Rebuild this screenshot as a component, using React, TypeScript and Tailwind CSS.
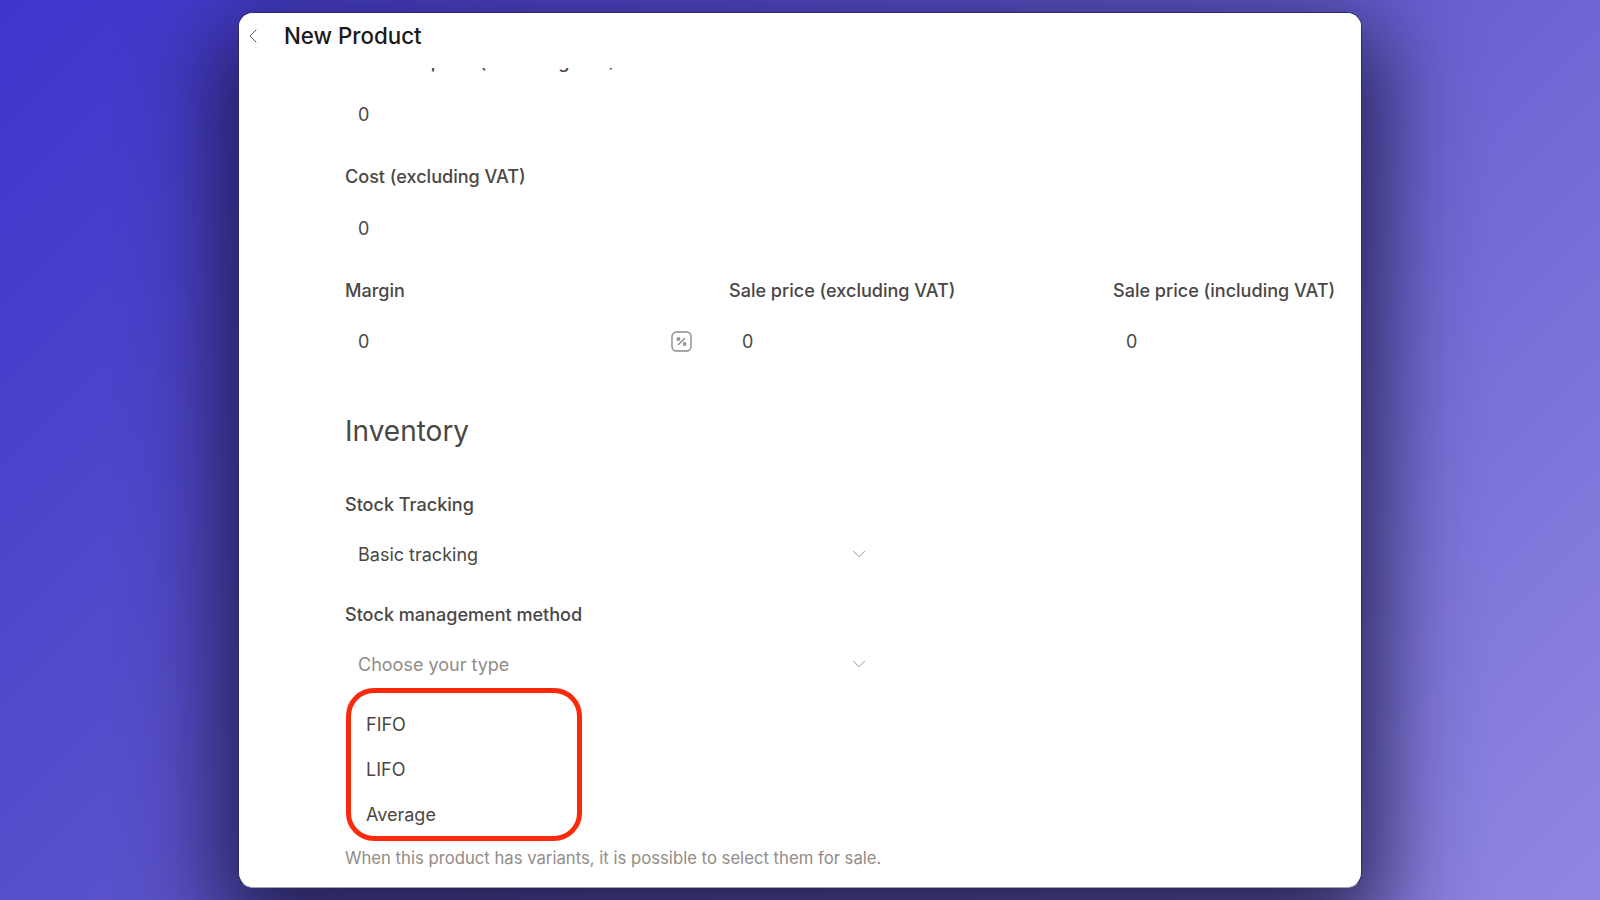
import { ChevronDown, ChevronLeft } from "lucide-react";

const labelClass = "h-6 text-[18.06px] leading-6 font-medium text-[#4a4744]";
const valueClass = "flex h-12 items-center pl-[13px] text-[18px] text-[#4a4744]";

const PercentIcon = () => (
    <svg width="21" height="21" viewBox="0 0 21 21" fill="none" stroke="#8f8a86" strokeWidth="1.4">
        <rect x="1" y="1" width="19" height="19" rx="4.5" />
        <path d="M7.5 13.5 13.5 7.5" strokeLinecap="round" />
        <circle cx="7.4" cy="8" r="1.2" />
        <circle cx="13.6" cy="13" r="1.2" />
    </svg>
);

const SelectField = ({ label, value, muted }: { label: string; value: string; muted?: boolean }) => (
    <div className="w-[528px]">
        <p className={labelClass}>{label}</p>
        <div className="mt-[13px] flex h-12 items-center justify-between pl-[13px] pr-[3px]">
            <span className={`text-[18px] ${muted ? "text-[#928c87]" : "text-[#4a4744]"}`}>{value}</span>
            <ChevronDown size={22} strokeWidth={1} color="#8f8a86" />
        </div>
    </div>
);

export default function App() {
    return (
        <div className="flex h-[900px] w-[1600px] justify-center overflow-hidden bg-[linear-gradient(135deg,#3f34cc_0%,#5d55cb_45%,#9087e3_100%)] pt-3 font-['Inter',sans-serif]">
            <div className="flex h-[876px] w-[1124px] flex-col overflow-hidden rounded-[15px] border border-[#2b2a70] border-b-[#a5a5b0] bg-white shadow-[0_34px_90px_20px_rgba(24,22,60,0.85)]">
                <header className="z-10 flex h-[55px] shrink-0 items-start bg-white pl-0.5 pt-2">
                    <ChevronLeft size={24} strokeWidth={1} color="#55514e" className="mt-[3px]" />
                    <h1 className="ml-[19px] text-[22.3px] leading-[29px] font-medium text-[#1c1a19]">New Product</h1>
                </header>

                <div className="flex-1 overflow-hidden pl-[106px]">
                    <div className="-mt-[18px]">
                        <p className={labelClass}>Purchase price (excluding VAT)</p>
                        <div className={`${valueClass} mt-4`}>0</div>
                    </div>
                    <div className="mt-[27px]">
                        <p className={labelClass}>Cost (excluding VAT)</p>
                        <div className={`${valueClass} mt-[15px]`}>0</div>
                    </div>
                    <div className="mt-[27px] grid grid-cols-[368px_368px_1fr] gap-x-4">
                        <div>
                            <p className={labelClass}>Margin</p>
                            <div className={`${valueClass} mt-[14px] justify-between pr-[21px]`}>
                                <span>0</span>
                                <PercentIcon />
                            </div>
                        </div>
                        <div>
                            <p className={`${labelClass} whitespace-nowrap`}>Sale price (excluding VAT)</p>
                            <div className={`${valueClass} mt-[14px]`}>0</div>
                        </div>
                        <div>
                            <p className={`${labelClass} whitespace-nowrap`}>Sale price (including VAT)</p>
                            <div className={`${valueClass} mt-[14px]`}>0</div>
                        </div>
                    </div>

                    <h2 className="mt-[48px] text-[28px] leading-9 text-[#4a4744]">Inventory</h2>

                    <div className="mt-[44px] flex flex-col gap-[25px]">
                        <SelectField label="Stock Tracking" value="Basic tracking" />
                        <SelectField label="Stock management method" value="Choose your type" muted />
                    </div>

                    <ul className="ml-px flex h-[153px] w-[236px] flex-col justify-center gap-[21px] rounded-[28px] border-[5px] border-[#fc2a0c] pl-[15px] pt-[10px] text-[18px] leading-6 text-[#4a4744]">
                        <li>FIFO</li>
                        <li>LIFO</li>
                        <li>Average</li>
                    </ul>

                    <p className="mt-[7px] text-[16.7px] leading-5 text-[#928c87]">
                        When this product has variants, it is possible to select them for sale.
                    </p>
                </div>
            </div>
        </div>
    );
}
